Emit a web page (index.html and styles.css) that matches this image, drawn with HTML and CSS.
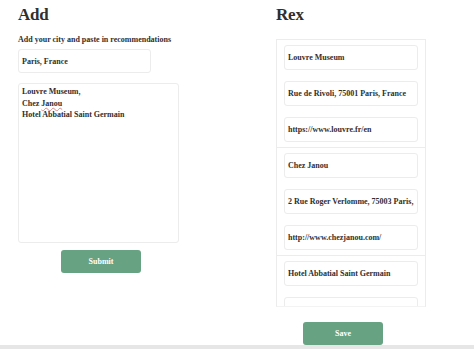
FILE: index.html
```html
<!DOCTYPE html>
<html lang="en">
<head>
    <meta charset="UTF-8">
    <meta name="viewport" content="width=device-width, initial-scale=1.0">
    <title>Rex</title>
    <link rel="stylesheet" href="styles.css">
</head>
<body>
    <div class="page">
        <section class="column column-add">
            <h1>Add</h1>
            <p class="hint">Add your city and paste in recommendations</p>
            <input class="field city-input" type="text" value="Paris, France">
            <div class="recs-text">
                <div>Louvre Museum,</div>
                <div>Chez <span class="typo">Janou</span></div>
                <div>Hotel Abbatial Saint Germain</div>
            </div>
            <button class="btn btn-submit">Submit</button>
        </section>

        <section class="column column-rex">
            <h1>Rex</h1>
            <div class="rex-list">
                <div class="rex-group">
                    <input class="field rex-field" type="text" value="Louvre Museum">
                    <input class="field rex-field" type="text" value="Rue de Rivoli, 75001 Paris, France">
                    <input class="field rex-field" type="text" value="https://www.louvre.fr/en">
                </div>
                <div class="rex-group">
                    <input class="field rex-field" type="text" value="Chez Janou">
                    <input class="field rex-field" type="text" value="2 Rue Roger Verlomme, 75003 Paris, France">
                    <input class="field rex-field" type="text" value="http://www.chezjanou.com/">
                </div>
                <div class="rex-group">
                    <input class="field rex-field" type="text" value="Hotel Abbatial Saint Germain">
                    <input class="field rex-field" type="text" value="46 Boulevard Saint-Germain, 75005 Paris, France">
                    <input class="field rex-field" type="text" value="https://www.hotelabbatial.com/">
                </div>
            </div>
            <button class="btn btn-save">Save</button>
        </section>
    </div>
    <div class="scroll-strip"></div>
</body>
</html>
```

FILE: styles.css
```css
:root {
    --text-primary: #2f2f2f;
    --border-color: #ececec;
    --button-color: #67a283;
    --strip-color: #e6e6e6;
}

* {
    margin: 0;
    padding: 0;
    box-sizing: border-box;
}

body {
    font-family: 'Liberation Serif', serif;
    color: var(--text-primary);
    background: #ffffff;
    overflow: hidden;
}

.page {
    height: 345px;
    display: grid;
    grid-template-columns: 258px 150px;
    padding-left: 18px;
}

.column {
    display: flex;
    flex-direction: column;
    align-items: flex-start;
}

.column h1 {
    font-size: 17px;
    font-weight: 700;
    line-height: 1;
    margin-top: 6px;
    letter-spacing: -0.2px;
}

.hint {
    font-size: 8px;
    font-weight: 700;
    margin-top: 12px;
    line-height: 10px;
}

.field {
    font-family: inherit;
    font-size: 8px;
    font-weight: 700;
    color: var(--text-primary);
    border: 1px solid var(--border-color);
    border-radius: 3px;
    background: #ffffff;
    outline: none;
}

.city-input {
    width: 133px;
    height: 24px;
    margin-top: 4px;
    padding: 0 3px;
}

.recs-text {
    width: 161px;
    height: 160px;
    margin-top: 10px;
    padding: 2px 3px;
    font-size: 8px;
    font-weight: 700;
    line-height: 11.5px;
    border: 1px solid var(--border-color);
    border-radius: 3px;
}

.typo {
    text-decoration: underline wavy #d88a8a;
    text-decoration-thickness: 1px;
    text-underline-offset: 1px;
}

.btn {
    width: 80px;
    height: 23px;
    border: none;
    border-radius: 3px;
    background: var(--button-color);
    color: #ffffff;
    font-family: inherit;
    font-size: 8px;
    font-weight: 700;
}

.btn-submit {
    margin-top: 7px;
    margin-left: 43px;
}

.rex-list {
    width: 150px;
    height: 268px;
    margin-top: 16px;
    border: 1px solid var(--border-color);
    border-bottom-color: #f3f3f3;
    overflow: hidden;
}

.rex-group {
    display: flex;
    flex-direction: column;
    gap: 11px;
    padding: 5px 7px 5px;
    border-bottom: 1px solid var(--border-color);
}

.rex-field {
    width: 134px;
    height: 25px;
    padding: 0 3px;
}

.btn-save {
    margin-top: 15px;
    margin-left: 27px;
}

.scroll-strip {
    height: 4px;
    background: var(--strip-color);
}
```
